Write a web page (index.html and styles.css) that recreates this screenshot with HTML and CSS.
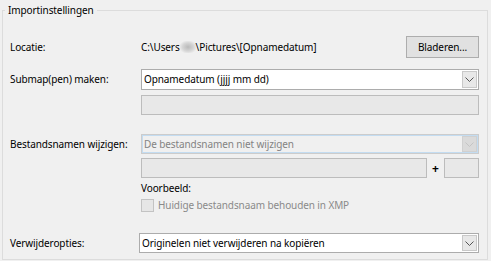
FILE: index.html
```html
<!DOCTYPE html>
<html>
    <head>
        <title>Importinstellingen</title>
        <link rel="stylesheet" href="styles.css">
    </head>
    <body>
        <fieldset class="group">
            <legend>Importinstellingen</legend>
            <div class="rows">
                <div class="label row-loc">Locatie:</div>
                <div class="row-loc loc">
                    <span class="path">C:\Users<span class="blurred"></span>\Pictures\[Opnamedatum]</span>
                    <button class="btn">Bladeren...</button>
                </div>

                <div class="label row-sub">Submap(pen) maken:</div>
                <div class="row-sub">
                    <div class="combo">
                        <span class="value">Opnamedatum (jjjj mm dd)</span>
                        <span class="arrow"><svg width="9" height="5" viewBox="0 0 9 5"><polyline points="0.5,0.5 4.5,4.5 8.5,0.5" fill="none" stroke="#555" stroke-width="1"/></svg></span>
                    </div>
                    <div class="field sub-field"></div>
                </div>

                <div class="label row-name">Bestandsnamen wijzigen:</div>
                <div class="row-name">
                    <div class="combo disabled">
                        <span class="value">De bestandsnamen niet wijzigen</span>
                        <span class="arrow"><svg width="9" height="5" viewBox="0 0 9 5"><polyline points="0.5,0.5 4.5,4.5 8.5,0.5" fill="none" stroke="#c4c4c4" stroke-width="1"/></svg></span>
                    </div>
                    <div class="name-line">
                        <div class="field wide"></div>
                        <span class="plus">+</span>
                        <div class="field small"></div>
                    </div>
                    <div class="example">Voorbeeld:</div>
                    <label class="check"><span class="box"></span>Huidige bestandsnaam behouden in XMP</label>
                </div>

                <div class="label row-del">Verwijderopties:</div>
                <div class="row-del">
                    <div class="combo del">
                        <span class="value">Originelen niet verwijderen na kopiëren</span>
                        <span class="arrow"><svg width="9" height="5" viewBox="0 0 9 5"><polyline points="0.5,0.5 4.5,4.5 8.5,0.5" fill="none" stroke="#555" stroke-width="1"/></svg></span>
                    </div>
                </div>
            </div>
        </fieldset>
    </body>
</html>
```

FILE: styles.css
```css
body{
    margin: 0;
    background: #f0f0f0;
    font-family: "Noto Sans", "Liberation Sans", sans-serif;
    font-size: 10px;
    letter-spacing: -0.1px;
    color: #000;
}

.group{
    margin: 2px 3px 0 2px;
    padding: 0 8px 7px 0;
    border: 1px solid #dcdcdc;
    box-sizing: border-box;
    height: 258px;
}
.group legend{
    margin-left: 2px;
    padding: 0 3px;
    line-height: 16px;
}

.rows{
    display: grid;
    grid-template-columns: 131px 1fr;
    padding-left: 7px;
}
.label{
    line-height: 16px;
    white-space: nowrap;
}

.row-loc{
    margin-top: 18px;
}
.label.row-loc{
    margin-top: 21px;
}
.loc{
    display: flex;
    justify-content: space-between;
    align-items: center;
}
.path{
    line-height: 16px;
}
.blurred{
    display: inline-block;
    width: 16px;
    height: 12px;
    vertical-align: -2px;
    background: radial-gradient(ellipse at center, #b9b9b9 0%, #d6d6d6 50%, rgba(240,240,240,0) 80%);
}
.btn{
    width: 73px;
    height: 22px;
    padding: 0;
    font: inherit;
    letter-spacing: inherit;
    color: #000;
    background: #e1e1e1;
    border: 1px solid #adadad;
}

.row-sub{
    margin-top: 11px;
}
.label.row-sub{
    margin-top: 13px;
}

.combo{
    display: flex;
    height: 21px;
    box-sizing: border-box;
    border: 1px solid #acacac;
    background: #fff;
    align-items: stretch;
}
.combo .value{
    flex: 1;
    line-height: 19px;
    padding-left: 2px;
}
.combo .arrow{
    width: 15px;
    margin: 1px;
    background: #e8e8e8;
    border: 1px solid #c9c9c9;
    box-sizing: border-box;
    display: flex;
    align-items: center;
    justify-content: center;
}
.combo.disabled{
    height: 20px;
    background: #f0f0f0;
    border-color: #cccccc;
    box-shadow: inset 0 0 0 1px #c3dcf1;
}
.combo.disabled .value{
    color: #838383;
    line-height: 18px;
}
.combo.disabled .arrow{
    background: #dadada;
    border-color: #d0d0d0;
}

.field{
    height: 20px;
    box-sizing: border-box;
    border: 1px solid #bcbcbc;
    background: #e8e8e8;
}
.sub-field{
    margin-top: 5px;
}

.row-name{
    margin-top: 19px;
}
.label.row-name{
    margin-top: 21px;
}
.name-line{
    display: flex;
    align-items: center;
    margin-top: 4px;
}
.name-line .wide{
    width: 286px;
}
.plus{
    width: 17px;
    text-align: center;
    font-weight: bold;
    font-size: 12px;
}
.name-line .small{
    flex: 1;
}
.example{
    line-height: 16px;
    margin-top: 2px;
}
.check{
    display: flex;
    align-items: center;
    margin-top: 1px;
    color: #8a8a8a;
    line-height: 16px;
}
.check .box{
    width: 13px;
    height: 13px;
    box-sizing: border-box;
    border: 1px solid #c3c3c3;
    background: #e6e6e6;
    margin-right: 4px;
}

.row-del{
    margin-top: 20px;
}
.label.row-del{
    margin-top: 22px;
}
.combo.del{
    height: 20px;
    margin-left: -2px;
}
.combo.del .value{
    line-height: 18px;
}
```
